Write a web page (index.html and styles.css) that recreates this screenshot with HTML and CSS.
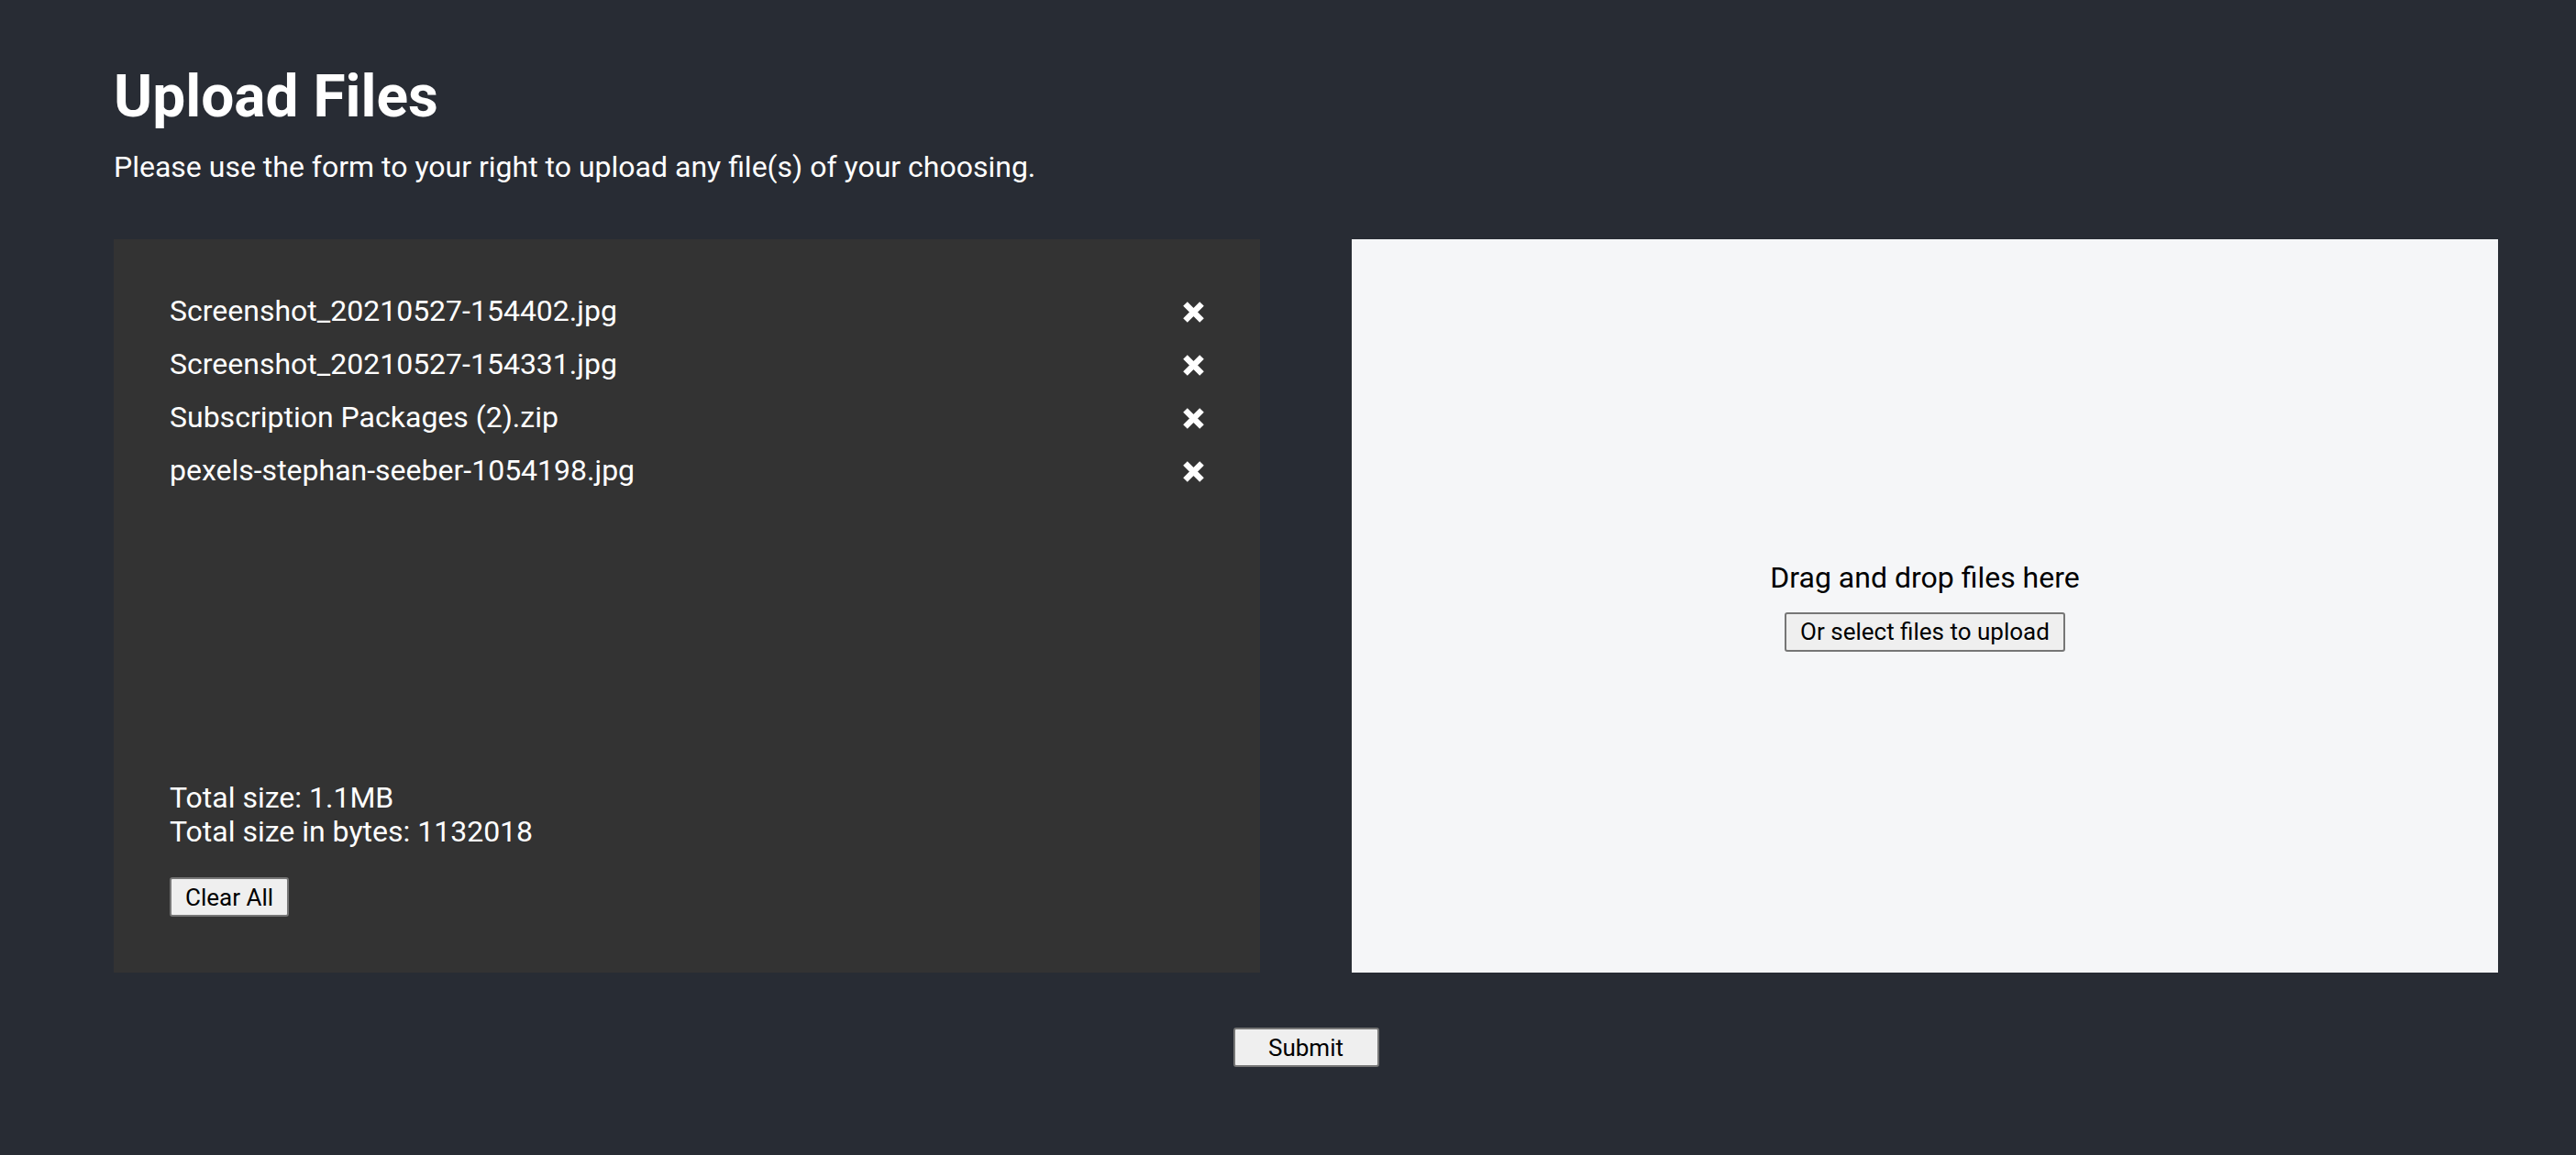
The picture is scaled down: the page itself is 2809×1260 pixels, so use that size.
FILE: index.html
```html
<!DOCTYPE html>
<html lang="en">
<head>
<meta charset="utf-8">
<title>Upload Files</title>
<link rel="stylesheet" href="styles.css">
</head>
<body>
<main class="page">
  <h1 class="title">Upload Files</h1>
  <p class="intro">Please use the form to your right to upload any file(s) of your choosing.</p>
  <div class="panels">
    <section class="files">
      <ul class="file-list">
        <li class="file"><span class="file-name">Screenshot_20210527-154402.jpg</span><span class="remove"><svg viewBox="0 0 23 23" width="23" height="23"><path d="M2.5 2.5L20.5 20.5M20.5 2.5L2.5 20.5" stroke="#fff" stroke-width="6.5"/></svg></span></li>
        <li class="file"><span class="file-name">Screenshot_20210527-154331.jpg</span><span class="remove"><svg viewBox="0 0 23 23" width="23" height="23"><path d="M2.5 2.5L20.5 20.5M20.5 2.5L2.5 20.5" stroke="#fff" stroke-width="6.5"/></svg></span></li>
        <li class="file"><span class="file-name">Subscription Packages (2).zip</span><span class="remove"><svg viewBox="0 0 23 23" width="23" height="23"><path d="M2.5 2.5L20.5 20.5M20.5 2.5L2.5 20.5" stroke="#fff" stroke-width="6.5"/></svg></span></li>
        <li class="file"><span class="file-name">pexels-stephan-seeber-1054198.jpg</span><span class="remove"><svg viewBox="0 0 23 23" width="23" height="23"><path d="M2.5 2.5L20.5 20.5M20.5 2.5L2.5 20.5" stroke="#fff" stroke-width="6.5"/></svg></span></li>
      </ul>
      <div class="summary">
        <div class="total">Total size: 1.1MB</div>
        <div class="total">Total size in bytes: 1132018</div>
        <button class="btn clear" type="button">Clear All</button>
      </div>
    </section>
    <section class="dropzone">
      <div class="drop-text">Drag and drop files here</div>
      <button class="btn select" type="button">Or select files to upload</button>
    </section>
  </div>
  <div class="actions">
    <button class="btn submit" type="submit">Submit</button>
  </div>
</main>
</body>
</html>
```
FILE: styles.css
```css
html, body {
  margin: 0;
  padding: 0;
  background: #282c34;
}

body {
  font-family: Roboto, "Liberation Sans", Arial, sans-serif;
  color: #ffffff;
}

.page {
  box-sizing: content-box;
  width: 2600px;
  padding: 68px 0 0 124px;
}

.title {
  margin: 0;
  font-weight: 700;
  font-size: 64px;
  line-height: 75px;
}

.intro {
  margin: 21px 0 0;
  font-size: 32px;
  line-height: 37px;
}

.panels {
  margin-top: 60px;
  display: grid;
  grid-template-columns: 1250px 1250px;
  column-gap: 100px;
  height: 800px;
}

.files {
  background: #333333;
  padding: 49px 61px 61px 61px;
  display: flex;
  flex-direction: column;
  justify-content: space-between;
}

.file-list {
  list-style: none;
  margin: 0;
  padding: 0;
}

.file {
  display: flex;
  justify-content: space-between;
  align-items: center;
  height: 58px;
  font-size: 32px;
  line-height: 58px;
}

.remove {
  display: flex;
  margin-top: 3px;
}

.summary {
  display: flex;
  flex-direction: column;
  align-items: flex-start;
}

.total {
  font-size: 32px;
  line-height: 37px;
}

.btn {
  font-family: Roboto, "Liberation Sans", Arial, sans-serif;
  font-size: 26px;
  color: #000000;
  background: #efefef;
  border: 2px solid #767676;
  border-radius: 3px;
  height: 43px;
  padding: 0 15px;
  line-height: 1;
}

.clear {
  margin-top: 31px;
}

.dropzone {
  background: #f5f6f8;
  color: #000000;
  display: flex;
  flex-direction: column;
  align-items: center;
  justify-content: center;
}

.drop-text {
  font-size: 32px;
  line-height: 37px;
}

.select {
  margin-top: 19px;
}

.actions {
  display: flex;
  justify-content: center;
  margin-top: 60px;
}

.submit {
  width: 159px;
}
```
